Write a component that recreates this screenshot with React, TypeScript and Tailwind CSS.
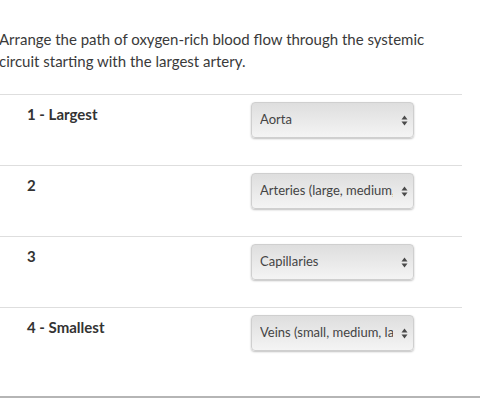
const rows = [
	{ label: '1 - Largest', value: 'Aorta' },
	{ label: '2', value: 'Arteries (large, medium, small)' },
	{ label: '3', value: 'Capillaries' },
	{ label: '4 - Smallest', value: 'Veins (small, medium, large)' },
];

function Arrows() {
	return (
		<svg width="7" height="11" viewBox="0 0 7 11" className="shrink-0">
			<path d="M3.5 0.5 L6.5 4.5 L0.5 4.5 Z" fill="#4a4a4a" />
			<path d="M3.5 10.5 L6.5 6.5 L0.5 6.5 Z" fill="#4a4a4a" />
		</svg>
	);
}

function FakeSelect({ value }: { value: string }) {
	return (
		<div className="w-[163px] h-[36px] flex items-center gap-2 pl-[8px] pr-[5px] rounded-[4px] border border-[#cfcfcf] bg-gradient-to-b from-[#dedede] to-[#f4f4f4] shadow-[0_1px_2px_rgba(0,0,0,0.25)]">
			<span className="flex-1 overflow-hidden whitespace-nowrap text-[13px] text-[#444]">
				{value}
			</span>
			<Arrows />
		</div>
	);
}

export default function App() {
	return (
		<div className="w-[480px] h-[400px] bg-white font-['Lato','Liberation_Sans',sans-serif] text-[#3a3a3a] overflow-hidden">
			<div className="w-[462px]">
				<p className="pt-[28px] text-[15px] leading-[22px] -ml-[1px]">
					Arrange the path of oxygen-rich blood flow through the systemic
					circuit starting with the largest artery.
				</p>
				<div className="mt-[22px]">
					{rows.map((row, i) => (
						<div
							key={row.label}
							className={
								'flex border-t border-[#dedede] pt-[7px] ' +
								(i === rows.length - 1 ? 'h-[89px]' : 'h-[71px]')
							}
						>
							<div className="w-[251px] shrink-0 pl-[27px] mt-[2px] leading-[20px] text-[15px] font-bold text-[#333]">
								{row.label}
							</div>
							<FakeSelect value={row.value} />
						</div>
					))}
				</div>
			</div>
			<div className="w-[480px] border-t-2 border-[#b5b5b5]" />
		</div>
	);
}
